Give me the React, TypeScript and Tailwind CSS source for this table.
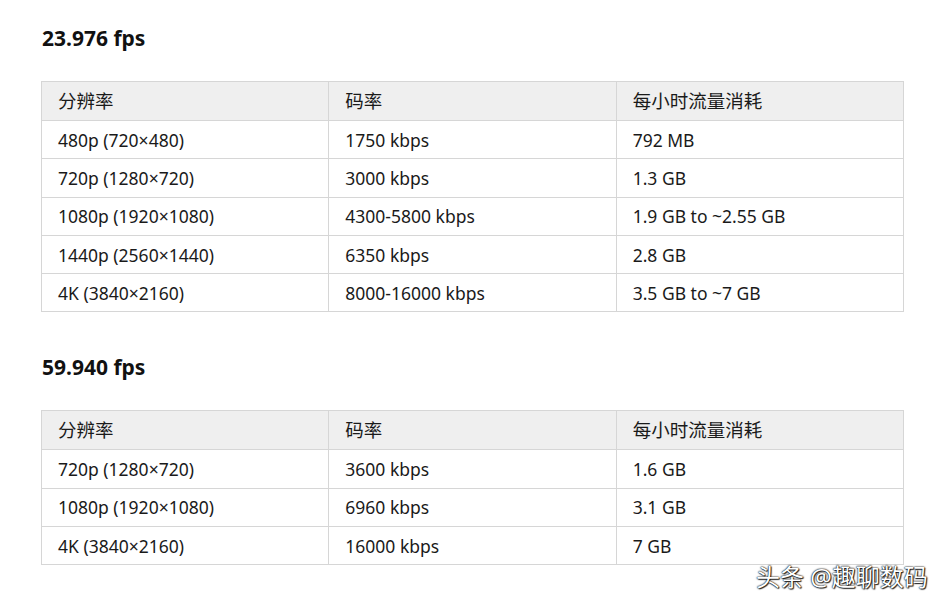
const rows1 = [
  ["480p (720×480)", "1750 kbps", "792 MB"],
  ["720p (1280×720)", "3000 kbps", "1.3 GB"],
  ["1080p (1920×1080)", "4300-5800 kbps", "1.9 GB to ~2.55 GB"],
  ["1440p (2560×1440)", "6350 kbps", "2.8 GB"],
  ["4K (3840×2160)", "8000-16000 kbps", "3.5 GB to ~7 GB"],
];

const rows2 = [
  ["720p (1280×720)", "3600 kbps", "1.6 GB"],
  ["1080p (1920×1080)", "6960 kbps", "3.1 GB"],
  ["4K (3840×2160)", "16000 kbps", "7 GB"],
];

const font = { fontFamily: '"Noto Sans", "Noto Sans CJK SC", sans-serif' };

const RateTable = ({ rows }: { rows: string[][] }) => (
  <table className="w-[863px] border-collapse text-[17.5px] text-[#1a1a1a]">
    <thead>
      <tr className="h-[39px] bg-[#efefef]">
        {["分辨率", "码率", "每小时流量消耗"].map((h) => (
          <th key={h} className="w-[287px] border border-[#d6d6d6] pl-4 text-left text-[18.5px] font-normal leading-6">
            {h}
          </th>
        ))}
      </tr>
    </thead>
    <tbody>
      {rows.map((r) => (
        <tr key={r[0]} className="h-[38.3px]">
          {r.map((c, i) => (
            <td key={i} className="border border-[#d6d6d6] pl-4 leading-6">
              {c}
            </td>
          ))}
        </tr>
      ))}
    </tbody>
  </table>
);

export default function App() {
  return (
    <div className="relative w-[948px] h-[609px] bg-white overflow-hidden" style={font}>
      <div className="flex flex-col pl-[41px] pt-6">
        <h2 className="text-[21px] leading-7 font-bold text-[#111] pl-px">23.976 fps</h2>
        <div className="mt-[29px]">
          <RateTable rows={rows1} />
        </div>
        <h2 className="mt-[41px] text-[21px] leading-7 font-bold text-[#111] pl-px">59.940 fps</h2>
        <div className="mt-[29px]">
          <RateTable rows={rows2} />
        </div>
      </div>
      <div className="absolute left-[756px] top-[561px] text-[24px] leading-8 text-white [text-shadow:0_0_2px_#000,0_0_1px_#000,1px_1px_1px_#333]">
        头条 @趣聊数码
      </div>
    </div>
  );
}
